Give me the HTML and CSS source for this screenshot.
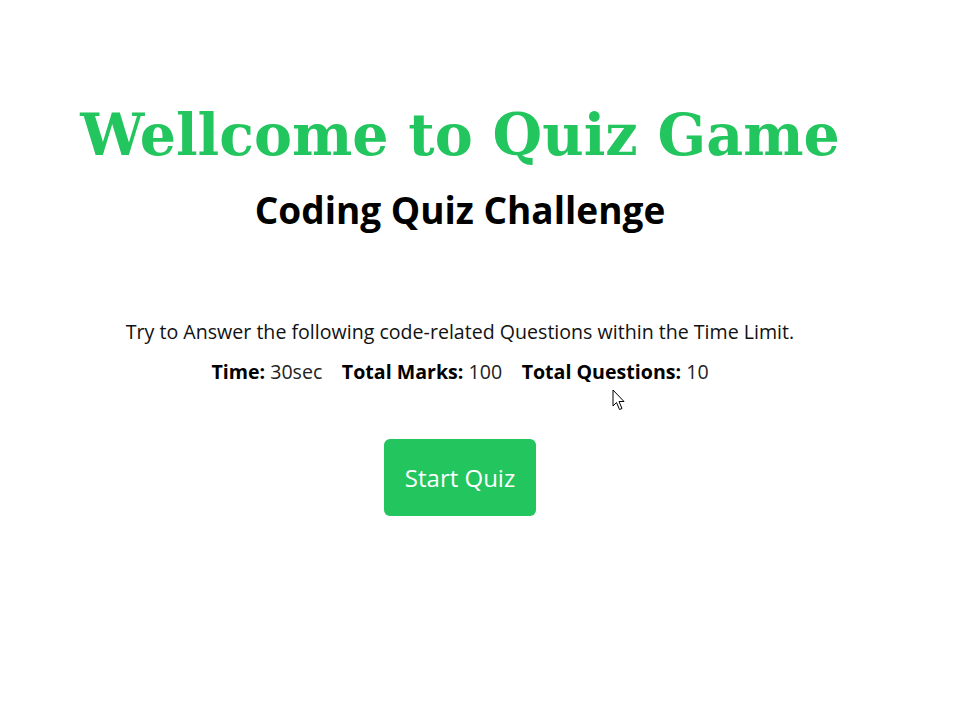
FILE: index.html
```html
<!DOCTYPE html>
<html lang="en">
<head>
<meta charset="utf-8">
<title>Quiz Game</title>
<link rel="stylesheet" href="styles.css">
</head>
<body>
<main class="page">
  <h1 class="title">Wellcome to Quiz Game</h1>
  <h2 class="subtitle">Coding Quiz Challenge</h2>
  <p class="intro">Try to Answer the following code-related Questions within the Time Limit.</p>
  <p class="stats">
    <span class="stat"><b>Time:</b> 30sec</span>
    <span class="stat"><b>Total Marks:</b> 100</span>
    <span class="stat"><b>Total Questions:</b> 10</span>
  </p>
  <button class="start">Start Quiz</button>
</main>
<svg class="cursor" width="14" height="22" viewBox="0 0 14 22"><path d="M1 1 L1 17 L4.5 13.5 L7.5 20.5 L10 19.5 L7 12.5 L12 12.5 Z" fill="#fff" stroke="#000" stroke-width="1" stroke-linejoin="round"/></svg>
</body>
</html>
```
FILE: styles.css
```css
html, body { margin: 0; padding: 0; background: #fff; }
body { font-family: "Open Sans", "Noto Sans", sans-serif; color: #000; position: relative; min-height: 720px; }
.page { width: 920px; display: flex; flex-direction: column; align-items: center; padding-top: 96px; }
.title { font-family: "DejaVu Serif", "Liberation Serif", serif; font-weight: bold; color: #22c55e; font-size: 57px; margin: 0; line-height: 78px; }
.subtitle { font-weight: 700; font-size: 37px; margin: 12px 0 0; line-height: 48px; }
.intro { font-size: 19.6px; margin: 85px 0 0; line-height: 26px; color: #111; }
.stats { font-size: 19.6px; margin: 14px 0 0; display: flex; gap: 19.5px; line-height: 26px; color: #222; }
.stat b { font-weight: 700; color: #000; }
.start { margin-top: 54px; width: 152px; height: 77px; background: #22c55e; color: #fff; border: none; border-radius: 6px; font-family: "Open Sans", sans-serif; font-size: 24px; }
.cursor { position: absolute; left: 612px; top: 389px; }
```
